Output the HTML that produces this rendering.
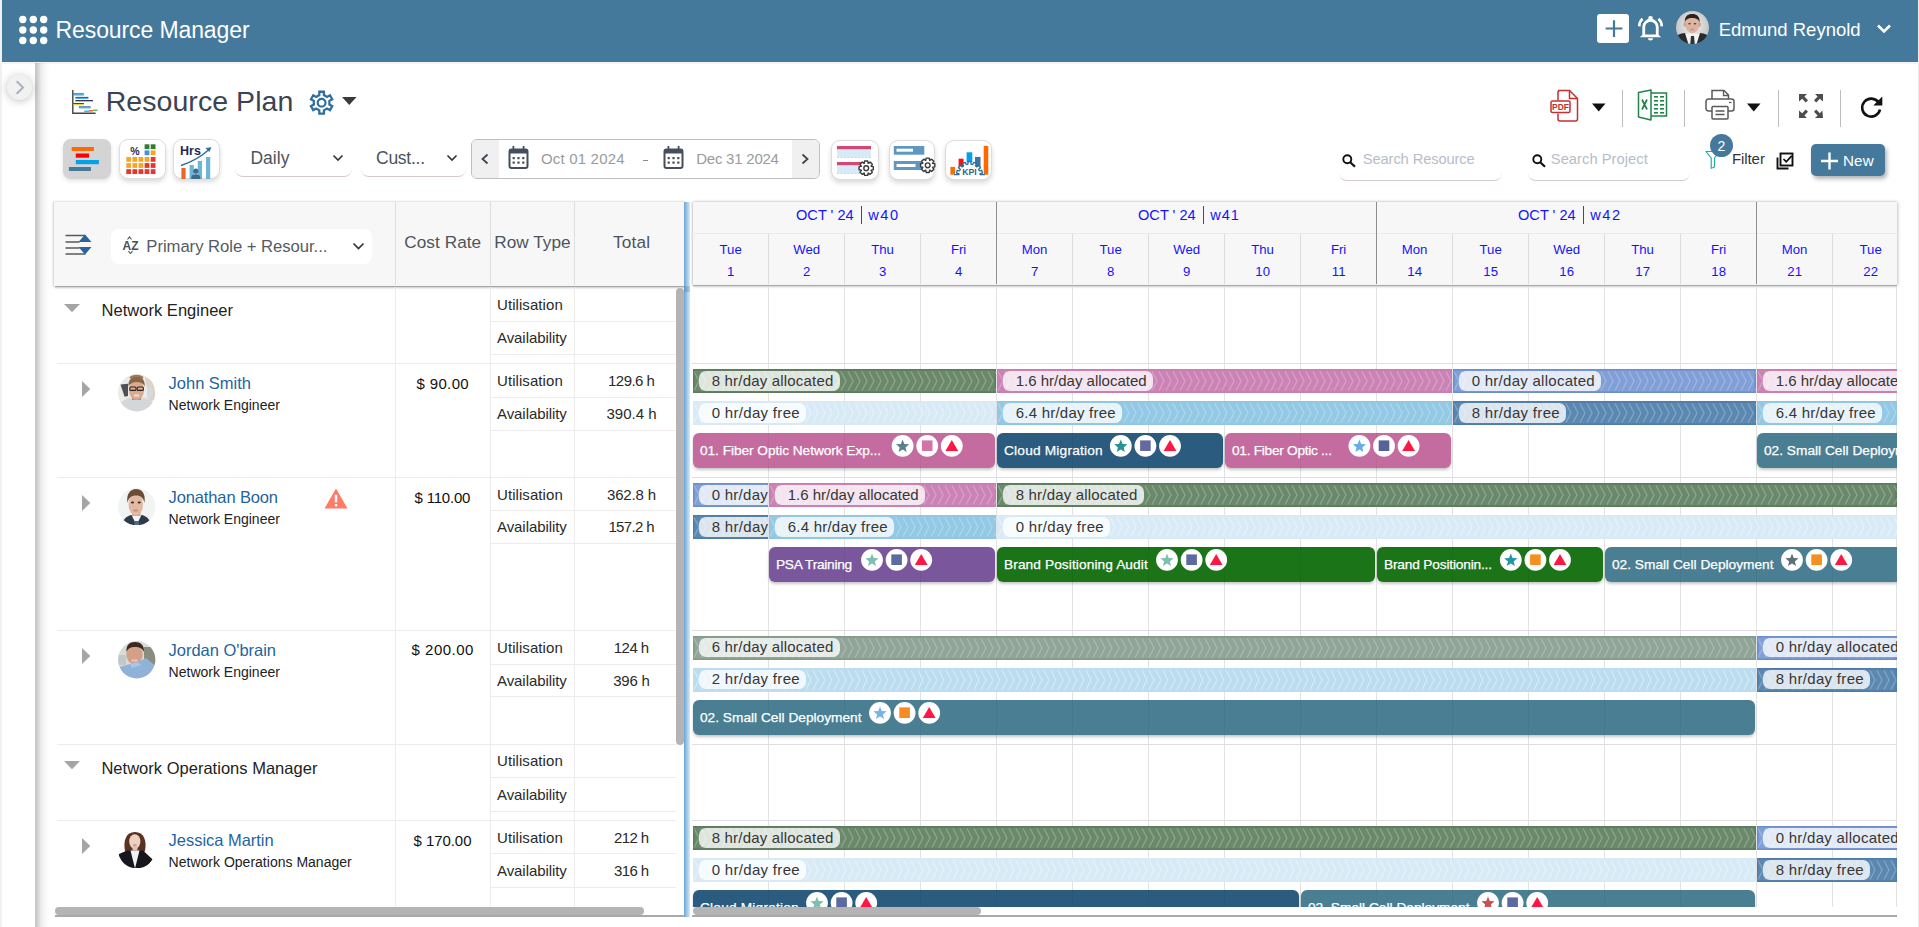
<!DOCTYPE html>
<html><head><meta charset="utf-8"><title>Resource Plan</title>
<style>
html,body{margin:0;padding:0;}
body{width:1919px;height:927px;overflow:hidden;position:relative;background:#fff;font-family:"Liberation Sans", sans-serif;}
.t{position:absolute;white-space:nowrap;line-height:1;}
svg{overflow:visible}
</style></head><body>
<div style="position:absolute;left:0px;top:0px;width:2px;height:927px;background:#f1f1f1"></div><div style="position:absolute;left:1918px;top:0px;width:1px;height:927px;background:#ececec"></div><div style="position:absolute;left:2px;top:62px;width:1916px;height:1.5px;background:#f6f4f2"></div><div style="position:absolute;left:35px;top:63px;width:16px;height:864px;background:linear-gradient(to right,rgba(0,0,0,0.23),rgba(0,0,0,0.2) 12%,rgba(0,0,0,0.07) 40%,rgba(0,0,0,0.015) 75%,rgba(0,0,0,0))"></div><div style="position:absolute;left:2px;top:0px;width:1916px;height:62px;background:#44799c"></div><svg style="position:absolute;left:0px;top:0px;" width="60" height="60" viewBox="0 0 60 60"><circle cx="22.8" cy="19.5" r="3.7" fill="#fff"/><circle cx="22.8" cy="30" r="3.7" fill="#fff"/><circle cx="22.8" cy="40.5" r="3.7" fill="#fff"/><circle cx="33.3" cy="19.5" r="3.7" fill="#fff"/><circle cx="33.3" cy="30" r="3.7" fill="#fff"/><circle cx="33.3" cy="40.5" r="3.7" fill="#fff"/><circle cx="43.7" cy="19.5" r="3.7" fill="#fff"/><circle cx="43.7" cy="30" r="3.7" fill="#fff"/><circle cx="43.7" cy="40.5" r="3.7" fill="#fff"/></svg><div class="t" style="left:55.6px;top:18.9px;font-size:23px;color:#fff;letter-spacing:-0.11px;">Resource Manager</div><div style="position:absolute;left:1597px;top:14px;width:32px;height:29px;background:#fff;border-radius:3px"></div><svg style="position:absolute;left:1597px;top:14px;" width="32" height="29" viewBox="0 0 32 29"><path d="M8.6 14.5H25.4M17 6.3V23" stroke="#44799c" stroke-width="2.2"/></svg><svg style="position:absolute;left:1636px;top:15px;" width="30" height="27" viewBox="0 0 30 27"><path d="M7.75 21V12A6.75 6.75 0 0 1 21.25 12V21" fill="none" stroke="#fff" stroke-width="2.8"/><path d="M3.7 22.2L7 19.4H22L25.3 22.2z" fill="#fff"/><ellipse cx="14.5" cy="3" rx="2.3" ry="1.9" fill="#fff"/><path d="M11.9 23.2H17.1A2.6 2.2 0 0 1 11.9 23.2z" fill="#fff"/><path d="M3.2 11.3C3.4 8 4.6 5.5 6.5 3.8M25.8 11.3C25.6 8 24.4 5.5 22.5 3.8" fill="none" stroke="#fff" stroke-width="2.6"/></svg><svg style="position:absolute;left:1676px;top:11px;" width="33" height="33" viewBox="0 0 33 33"><defs><clipPath id="ca0"><circle cx="16.5" cy="16.5" r="16.5"/></clipPath><radialGradient id="bg0" cx="0.5" cy="0.45" r="0.6"><stop offset="0" stop-color="#f4f4f4"/><stop offset="1" stop-color="#bdbdbd"/></radialGradient><filter id="bh0"><feGaussianBlur stdDeviation="0.45"/></filter></defs><g clip-path="url(#ca0)"><g filter="url(#bh0)"><rect width="33" height="33" fill="url(#bg0)"/><path d="M8.5 22.5h16l1 11h-18z" fill="#f2f2f2"/><path d="M-1 27c2-3 5-4.5 10-5l3.5 11.5H-1zM34 27c-2-3-5-4.5-10-5l-3.5 11.5H34z" fill="#2a2a2a"/><path d="M15 25h3l.8 8.5h-4.6z" fill="#333"/><ellipse cx="16.2" cy="13.2" rx="7.2" ry="9" fill="#dcb4a2"/><ellipse cx="8.8" cy="13.5" rx="1.3" ry="2.2" fill="#d0a08c"/><ellipse cx="23.6" cy="13.5" rx="1.3" ry="2.2" fill="#d0a08c"/><path d="M8.8 11.5c-.5-6 3-8.5 7.4-8.5s8 2.5 7.4 8.5c-.8-3-3-4.5-7.4-4.5s-6.6 1.5-7.4 4.5z" fill="#2a221e"/><ellipse cx="13.5" cy="12.8" rx="1.3" ry="0.7" fill="#4a3a32"/><ellipse cx="19" cy="12.8" rx="1.3" ry="0.7" fill="#4a3a32"/><ellipse cx="16.2" cy="18.5" rx="2.5" ry="0.9" fill="#c89a90"/></g></g></svg><div class="t" style="left:1718.7px;top:20.5px;font-size:18.5px;color:#fff;">Edmund Reynold</div><svg style="position:absolute;left:1876px;top:23px;" width="16" height="12" viewBox="0 0 16 12"><path d="M2 2.5l6 6 6-6" fill="none" stroke="#fff" stroke-width="2.6"/></svg><div style="position:absolute;left:7px;top:75px;width:25px;height:25px;background:#f1f1f1;border-radius:50%;box-shadow:0 1px 9px rgba(0,0,0,0.25)"></div><svg style="position:absolute;left:7px;top:75px;" width="25" height="25" viewBox="0 0 25 25"><path d="M9.7 6.3l6.3 6.2-6.3 6.2" fill="none" stroke="#a9b0bb" stroke-width="2"/></svg><svg style="position:absolute;left:71px;top:89px;" width="28" height="27" viewBox="0 0 28 27"><path d="M1.8 1.1V24.3H24.6" fill="none" stroke="#454545" stroke-width="1.4"/><rect x="2.4" y="4.4" width="10.5" height="1.05" fill="#1d4c73"/><rect x="2.4" y="5.45" width="10.5" height="1.05" fill="#2aa8f0"/><rect x="4.4" y="7.9" width="13.0" height="0.95" fill="#1d3c5a"/><rect x="4.4" y="8.85" width="13.0" height="0.95" fill="#22a0f0"/><rect x="4.4" y="11" width="17.5" height="0.95" fill="#2a1f50"/><rect x="4.4" y="11.95" width="17.5" height="0.95" fill="#a8e000"/><rect x="2.4" y="14.1" width="10.5" height="1.10" fill="#2a2f5a"/><rect x="2.4" y="15.20" width="10.5" height="1.10" fill="#e0dc20"/><rect x="7.9" y="17.4" width="11.7" height="1.00" fill="#1d4c73"/><rect x="7.9" y="18.40" width="11.7" height="1.00" fill="#2aa8f0"/><rect x="13.2" y="21.5" width="4.8" height="1.4" fill="#3aa8f0"/><rect x="18" y="21" width="3.9" height="1.6" fill="#ff6a1a"/><rect x="21.9" y="20.5" width="4.8" height="1.4" fill="#4ac060"/></svg><div class="t" style="left:105.7px;top:86.6px;font-size:28.5px;color:#3b4452;letter-spacing:0.06px;">Resource Plan</div><svg style="position:absolute;left:309px;top:90px;" width="26" height="26" viewBox="0 0 26 26"><path d="M10.30 5.04L10.30 1.74L14.90 1.74L14.90 5.04L18.09 6.88L20.94 5.23L23.24 9.21L20.39 10.86L20.39 14.54L23.24 16.19L20.94 20.17L18.09 18.52L14.90 20.36L14.90 23.66L10.30 23.66L10.30 20.36L7.11 18.52L4.26 20.17L1.96 16.19L4.81 14.54L4.81 10.86L1.96 9.21L4.26 5.23L7.11 6.88Z" fill="none" stroke="#2f6fa0" stroke-width="2.3" stroke-linejoin="miter"/><circle cx="12.6" cy="12.7" r="3.9" fill="none" stroke="#2f6fa0" stroke-width="2.2"/></svg><svg style="position:absolute;left:342px;top:97px;" width="15" height="9" viewBox="0 0 15 9"><path d="M0 0h14.5L7.25 8z" fill="#3a3a3a"/></svg><svg style="position:absolute;left:1550px;top:89px;" width="32" height="33" viewBox="0 0 32 33"><path d="M8 1.5h11.5l8 8V30a2 2 0 0 1-2 2H10a2 2 0 0 1-2-2v-5.5M8 11.5V3.5a2 2 0 0 1 2-2" fill="none" stroke="#c52f2f" stroke-width="1.5"/><path d="M19.5 1.5v8h8" fill="none" stroke="#c52f2f" stroke-width="1.5"/><rect x="1" y="12" width="19" height="11.5" rx="1.5" fill="#fff" stroke="#c52f2f" stroke-width="1.5"/><text x="10.5" y="21" font-family="Liberation Sans" font-size="8.5" font-weight="700" fill="#c52f2f" text-anchor="middle">PDF</text></svg><svg style="position:absolute;left:1592px;top:103px;" width="14" height="9" viewBox="0 0 14 9"><path d="M0 .5h13.5L6.75 8.5z" fill="#111"/></svg><div style="position:absolute;left:1622px;top:90px;width:1px;height:37px;background:#bdbdbd"></div><div style="position:absolute;left:1684px;top:90px;width:1px;height:37px;background:#bdbdbd"></div><div style="position:absolute;left:1778px;top:90px;width:1px;height:37px;background:#bdbdbd"></div><div style="position:absolute;left:1840px;top:90px;width:1px;height:37px;background:#bdbdbd"></div><svg style="position:absolute;left:1637px;top:89px;" width="32" height="32" viewBox="0 0 32 32"><path d="M1.5 3.5L14 1v30L1.5 28z" fill="#fff" stroke="#21844a" stroke-width="1.5" stroke-linejoin="round"/><path d="M14 4h15.5v23H14" fill="none" stroke="#21844a" stroke-width="1.5"/><path d="M5 10.5l5 10M10 10.5l-5 10" stroke="#21844a" stroke-width="1.7"/><rect x="17" y="7" width="4" height="1.6" fill="#21844a"/><rect x="23" y="7" width="4" height="1.6" fill="#21844a"/><rect x="17" y="11" width="4" height="1.6" fill="#21844a"/><rect x="23" y="11" width="4" height="1.6" fill="#21844a"/><rect x="17" y="15" width="4" height="1.6" fill="#21844a"/><rect x="23" y="15" width="4" height="1.6" fill="#21844a"/><rect x="17" y="19" width="4" height="1.6" fill="#21844a"/><rect x="23" y="19" width="4" height="1.6" fill="#21844a"/><rect x="17" y="23" width="4" height="1.6" fill="#21844a"/><rect x="23" y="23" width="4" height="1.6" fill="#21844a"/></svg><svg style="position:absolute;left:1705px;top:89px;" width="31" height="32" viewBox="0 0 31 32"><path d="M7 10V1.5h12l4.5 4.5V10" fill="none" stroke="#5a5a5a" stroke-width="1.5"/><path d="M18.5 1.5v5h5" fill="none" stroke="#5a5a5a" stroke-width="1.3"/><path d="M7 22H3.5a2.5 2.5 0 0 1-2.5-2.5v-7a2.5 2.5 0 0 1 2.5-2.5h23a2.5 2.5 0 0 1 2.5 2.5v7a2.5 2.5 0 0 1-2.5 2.5H23" fill="none" stroke="#5a5a5a" stroke-width="1.5"/><rect x="7" y="17.5" width="16" height="12.5" rx="1" fill="#fff" stroke="#5a5a5a" stroke-width="1.5"/><path d="M10.5 22h9M10.5 25.5h9" stroke="#5a5a5a" stroke-width="1.5"/><rect x="24" y="12.8" width="2.5" height="1.3" fill="#5a5a5a"/></svg><svg style="position:absolute;left:1747px;top:103px;" width="14" height="9" viewBox="0 0 14 9"><path d="M0 .5h13.5L6.75 8.5z" fill="#111"/></svg><svg style="position:absolute;left:1798px;top:93px;" width="26" height="26" viewBox="0 0 26 26"><g fill="#4d4d4d"><path d="M1 1h8l-2.6 2.6 3.6 3.6-2.2 2.2-3.6-3.6L1 8.4z"/><path d="M25 1h-8l2.6 2.6-3.6 3.6 2.2 2.2 3.6-3.6L25 8.4z"/><path d="M1 25h8l-2.6-2.6 3.6-3.6-2.2-2.2-3.6 3.6L1 17.6z"/><path d="M25 25h-8l2.6-2.6-3.6-3.6 2.2-2.2 3.6 3.6 2.6-2.6z"/></g></svg><svg style="position:absolute;left:1859px;top:94px;" width="25" height="25" viewBox="0 0 25 25"><path d="M19.6 8.5A9 9 0 1 0 21 15.5" fill="none" stroke="#111" stroke-width="2.6"/><path d="M23.3 2.5v9h-9z" fill="#111"/></svg><div style="position:absolute;left:63px;top:139px;width:48px;height:40px;background:#d4d4d4;border-radius:8px;box-shadow:0 2px 4px rgba(0,0,0,0.12)"></div><svg style="position:absolute;left:63px;top:139px;" width="48" height="40" viewBox="0 0 48 40"><rect x="8.7" y="8" width="22.2" height="4" fill="#ff6a00"/><rect x="12.8" y="14.5" width="13.2" height="4.2" fill="#ff0000"/><rect x="12.8" y="21" width="23.1" height="4.2" fill="#00a2e8"/><rect x="5.9" y="28" width="22" height="4" fill="#44789c"/></svg><div style="position:absolute;left:119px;top:139px;width:47px;height:40px;background:#fff;border:1px solid #dedede;box-sizing:border-box;border-radius:9px;box-shadow:0 3px 4px rgba(0,0,0,0.14)"></div><div style="position:absolute;left:173px;top:139px;width:47px;height:40px;background:#fff;border:1px solid #dedede;box-sizing:border-box;border-radius:9px;box-shadow:0 3px 4px rgba(0,0,0,0.14)"></div><svg style="position:absolute;left:119px;top:139px;" width="47" height="40" viewBox="0 0 47 40"><rect x="7.3" y="18.0" width="4.8" height="4.8" fill="#f5a623"/><rect x="13.4" y="18.0" width="4.8" height="4.8" fill="#f5a623"/><rect x="19.5" y="18.0" width="4.8" height="4.8" fill="#f5a623"/><rect x="25.6" y="18.0" width="4.8" height="4.8" fill="#f5a623"/><rect x="31.7" y="18.0" width="4.8" height="4.8" fill="#e8352f"/><rect x="7.3" y="24.1" width="4.8" height="4.8" fill="#f5a623"/><rect x="13.4" y="24.1" width="4.8" height="4.8" fill="#f5a623"/><rect x="19.5" y="24.1" width="4.8" height="4.8" fill="#f5a623"/><rect x="25.6" y="24.1" width="4.8" height="4.8" fill="#e8352f"/><rect x="31.7" y="24.1" width="4.8" height="4.8" fill="#e8352f"/><rect x="7.3" y="30.2" width="4.8" height="4.8" fill="#e8352f"/><rect x="13.4" y="30.2" width="4.8" height="4.8" fill="#e8352f"/><rect x="19.5" y="30.2" width="4.8" height="4.8" fill="#e8352f"/><rect x="25.6" y="30.2" width="4.8" height="4.8" fill="#e8352f"/><rect x="31.7" y="30.2" width="4.8" height="4.8" fill="#e8352f"/><rect x="25.6" y="5.3" width="4.8" height="4.8" fill="#2e7d32"/><rect x="31.7" y="5.3" width="4.8" height="4.8" fill="#2e7d32"/><rect x="25.6" y="11.4" width="4.8" height="4.8" fill="#4a90d9"/><rect x="31.7" y="11.4" width="4.8" height="4.8" fill="#f5a623"/><text x="16" y="15.8" font-family="Liberation Sans" font-size="10.5" font-weight="700" fill="#1f2a5a" text-anchor="middle">%</text></svg><svg style="position:absolute;left:173px;top:139px;" width="47" height="40" viewBox="0 0 47 40"><text x="7" y="15.8" font-family="Liberation Sans" font-size="12.5" font-weight="700" fill="#1f2a5a">Hrs</text><path d="M8 26.5C17 23.5 28 18 36 10.5" fill="none" stroke="#2f6f9a" stroke-width="1.4"/><path d="M38.5 8.2l-6 .9 3.8 4z" fill="#2f6f9a"/><rect x="8.4" y="29" width="4.2" height="11" fill="#e8682a"/><rect x="16.6" y="26" width="4.2" height="14" fill="#6bb6d8"/><rect x="24.8" y="22" width="4.2" height="18" fill="#6bb6d8"/><rect x="33" y="18" width="4.2" height="22" fill="#6bb6d8"/><circle cx="22.8" cy="32.2" r="2.6" fill="#3c6a8a"/><path d="M18.2 40c0-3.8 1.8-4.8 4.6-4.8s4.6 1 4.6 4.8z" fill="#3c6a8a"/></svg><div style="position:absolute;left:235px;top:157px;width:117px;height:20px;border-bottom:1px solid #d6c9c9;border-radius:0 0 8px 8px;box-sizing:border-box"></div><div class="t" style="left:250.4px;top:149.6px;font-size:17.5px;color:#4b5561;letter-spacing:0.03px;">Daily</div><svg style="position:absolute;left:332px;top:154px;" width="12" height="8" viewBox="0 0 12 8"><path d="M1.5 1.5l4.5 4.5 4.5-4.5" fill="none" stroke="#333" stroke-width="1.6"/></svg><div style="position:absolute;left:361px;top:157px;width:104.5px;height:20px;border-bottom:1px solid #d6c9c9;border-radius:0 0 8px 8px;box-sizing:border-box"></div><div class="t" style="left:376.0px;top:149.6px;font-size:17.5px;color:#4b5561;letter-spacing:-0.26px;">Cust...</div><svg style="position:absolute;left:445.5px;top:154px;" width="12" height="8" viewBox="0 0 12 8"><path d="M1.5 1.5l4.5 4.5 4.5-4.5" fill="none" stroke="#333" stroke-width="1.6"/></svg><div style="position:absolute;left:471px;top:139px;width:349px;height:40px;border:1px solid #bfbfbf;border-radius:6px;box-sizing:border-box;overflow:hidden;background:#fff"></div><div style="position:absolute;left:472px;top:140px;width:27px;height:38px;background:#f0f0f0;border-radius:5px 0 0 5px"></div><div style="position:absolute;left:792px;top:140px;width:27px;height:38px;background:#f0f0f0;border-radius:0 5px 5px 0"></div><svg style="position:absolute;left:480px;top:153px;" width="10" height="12" viewBox="0 0 10 12"><path d="M7.5 1.5l-5 4.5 5 4.5" fill="none" stroke="#3d4652" stroke-width="1.8"/></svg><svg style="position:absolute;left:800px;top:153px;" width="10" height="12" viewBox="0 0 10 12"><path d="M2.5 1.5l5 4.5-5 4.5" fill="none" stroke="#3d4652" stroke-width="1.8"/></svg><svg style="position:absolute;left:508px;top:146px;" width="21" height="23" viewBox="0 0 21 23"><rect x="1.5" y="3.5" width="18" height="18.5" rx="2" fill="#fff" stroke="#454e5a" stroke-width="2"/><rect x="1.5" y="3.5" width="18" height="4" fill="#454e5a"/><rect x="4.5" y="0" width="1.8" height="4" fill="#454e5a"/><rect x="14.7" y="0" width="1.8" height="4" fill="#454e5a"/><rect x="4.6" y="11" width="2.2" height="2.2" fill="#454e5a"/><rect x="4.6" y="15.5" width="2.2" height="2.2" fill="#454e5a"/><rect x="9.4" y="11" width="2.2" height="2.2" fill="#454e5a"/><rect x="9.4" y="15.5" width="2.2" height="2.2" fill="#454e5a"/><rect x="14.2" y="11" width="2.2" height="2.2" fill="#454e5a"/><rect x="14.2" y="15.5" width="2.2" height="2.2" fill="#454e5a"/></svg><svg style="position:absolute;left:663px;top:146px;" width="21" height="23" viewBox="0 0 21 23"><rect x="1.5" y="3.5" width="18" height="18.5" rx="2" fill="#fff" stroke="#454e5a" stroke-width="2"/><rect x="1.5" y="3.5" width="18" height="4" fill="#454e5a"/><rect x="4.5" y="0" width="1.8" height="4" fill="#454e5a"/><rect x="14.7" y="0" width="1.8" height="4" fill="#454e5a"/><rect x="4.6" y="11" width="2.2" height="2.2" fill="#454e5a"/><rect x="4.6" y="15.5" width="2.2" height="2.2" fill="#454e5a"/><rect x="9.4" y="11" width="2.2" height="2.2" fill="#454e5a"/><rect x="9.4" y="15.5" width="2.2" height="2.2" fill="#454e5a"/><rect x="14.2" y="11" width="2.2" height="2.2" fill="#454e5a"/><rect x="14.2" y="15.5" width="2.2" height="2.2" fill="#454e5a"/></svg><div class="t" style="left:541.0px;top:151.0px;font-size:15px;color:#9b9b9b;letter-spacing:0.18px;">Oct 01 2024</div><div style="position:absolute;left:643px;top:159.5px;width:5px;height:1.5px;background:#8a8a8a"></div><div class="t" style="left:696.2px;top:151.0px;font-size:15px;color:#9b9b9b;letter-spacing:-0.23px;">Dec 31 2024</div><div style="position:absolute;left:831px;top:140px;width:48px;height:40px;background:#fff;border:1px solid #dcdcdc;box-sizing:border-box;border-radius:9px;box-shadow:0 3px 5px rgba(0,0,0,0.15)"></div><div style="position:absolute;left:889px;top:140px;width:46px;height:40px;background:#fff;border:1px solid #dcdcdc;box-sizing:border-box;border-radius:9px;box-shadow:0 3px 5px rgba(0,0,0,0.15)"></div><div style="position:absolute;left:944.5px;top:140px;width:47px;height:40px;background:#fff;border:1px solid #dcdcdc;box-sizing:border-box;border-radius:9px;box-shadow:0 3px 5px rgba(0,0,0,0.15)"></div><svg style="position:absolute;left:831px;top:140px;" width="48" height="40" viewBox="0 0 48 40"><rect x="6" y="6" width="34" height="11.5" fill="#d6ebf7"/><rect x="6" y="6" width="34" height="3.2" fill="#d5486f"/><rect x="6" y="22" width="34" height="11.5" fill="#d6ebf7"/><rect x="6" y="22" width="34" height="3.2" fill="#d5486f"/><path d="M6 17.5h34M6 33.5h34" stroke="#9ccbe6" stroke-width="0.6" stroke-dasharray="2 1.5"/><path d="M40.13 26.25L42.33 26.65L42.33 29.75L40.13 30.15L40.06 30.30L41.34 32.15L39.15 34.34L37.30 33.06L37.15 33.13L36.75 35.33L33.65 35.33L33.25 33.13L33.10 33.06L31.25 34.34L29.06 32.15L30.34 30.30L30.27 30.15L28.07 29.75L28.07 26.65L30.27 26.25L30.34 26.10L29.06 24.25L31.25 22.06L33.10 23.34L33.25 23.27L33.65 21.07L36.75 21.07L37.15 23.27L37.30 23.34L39.15 22.06L41.34 24.25L40.06 26.10Z" fill="#fff" stroke="#3a3a3a" stroke-width="1.4" stroke-linejoin="round"/><circle cx="35.2" cy="28.2" r="2.38" fill="none" stroke="#3a3a3a" stroke-width="1.4"/></svg><svg style="position:absolute;left:889px;top:140px;" width="46" height="40" viewBox="0 0 46 40"><rect x="4.8" y="6" width="30.5" height="8.7" fill="#5f97c1"/><rect x="7.5" y="8.7" width="16.5" height="3" fill="#fff"/><rect x="4.8" y="21" width="30.5" height="9" fill="#5f97c1"/><rect x="7.5" y="24" width="19" height="3" fill="#fff"/><path d="M43.63 23.35L45.83 23.75L45.83 26.85L43.63 27.25L43.56 27.40L44.84 29.25L42.65 31.44L40.80 30.16L40.65 30.23L40.25 32.43L37.15 32.43L36.75 30.23L36.60 30.16L34.75 31.44L32.56 29.25L33.84 27.40L33.77 27.25L31.57 26.85L31.57 23.75L33.77 23.35L33.84 23.20L32.56 21.35L34.75 19.16L36.60 20.44L36.75 20.37L37.15 18.17L40.25 18.17L40.65 20.37L40.80 20.44L42.65 19.16L44.84 21.35L43.56 23.20Z" fill="#fff" stroke="#3a3a3a" stroke-width="1.4" stroke-linejoin="round"/><circle cx="38.7" cy="25.3" r="2.38" fill="none" stroke="#3a3a3a" stroke-width="1.4"/></svg><svg style="position:absolute;left:944.5px;top:140px;" width="47" height="40" viewBox="0 0 47 40"><rect x="5.4" y="26.9" width="4.6" height="7.8" fill="#ff6a00"/><rect x="13.6" y="18.7" width="5" height="10" fill="#ff1010"/><rect x="21.6" y="12.3" width="5.7" height="10" fill="#00a2e8"/><rect x="30" y="16.9" width="5.5" height="10" fill="#3f73a0"/><rect x="38.7" y="5.9" width="4.6" height="28.8" fill="#ff6a00"/><path d="M9.00 34.60L13.90 34.60L13.94 33.73L11.58 33.19L12.24 30.26L14.60 30.80L15.36 29.23L13.47 27.72L15.34 25.38L17.23 26.88L18.60 25.80L17.55 23.62L20.25 22.31L21.30 24.50L23.00 24.11L23.00 21.69L26.00 21.69L26.00 24.11L27.70 24.50L28.75 22.31L31.45 23.62L30.40 25.80L31.77 26.88L33.66 25.38L35.53 27.72L33.64 29.23L34.40 30.80L36.76 30.26L37.42 33.19L35.06 33.73L35.10 34.60L40.00 34.60" fill="#fff" stroke="#2f6f9a" stroke-width="1.3" stroke-linejoin="round"/><text x="24.5" y="34.6" font-family="Liberation Sans" font-size="8.6" font-weight="700" fill="#2f5f8a" text-anchor="middle">KPI</text></svg><div style="position:absolute;left:1339px;top:160px;width:163px;height:20.5px;border-bottom:1px solid #d6c9c9;border-radius:0 0 8px 8px;box-sizing:border-box"></div><svg style="position:absolute;left:1342px;top:153.5px;" width="15" height="13" viewBox="0 0 15 13"><circle cx="5.3" cy="5.3" r="4" fill="none" stroke="#111" stroke-width="1.9"/><path d="M8.2 8.2l4.8 4.6" stroke="#111" stroke-width="2.2"/></svg><div class="t" style="left:1362.8px;top:151.9px;font-size:14.7px;color:#b6bdc8;letter-spacing:-0.11px;">Search Resource</div><div style="position:absolute;left:1528px;top:160px;width:162px;height:20.5px;border-bottom:1px solid #d6c9c9;border-radius:0 0 8px 8px;box-sizing:border-box"></div><svg style="position:absolute;left:1531.5px;top:153.5px;" width="15" height="13" viewBox="0 0 15 13"><circle cx="5.3" cy="5.3" r="4" fill="none" stroke="#111" stroke-width="1.9"/><path d="M8.2 8.2l4.8 4.6" stroke="#111" stroke-width="2.2"/></svg><div class="t" style="left:1550.8px;top:151.9px;font-size:14.7px;color:#b6bdc8;letter-spacing:0.05px;">Search Project</div><svg style="position:absolute;left:1705px;top:150px;" width="16" height="19" viewBox="0 0 16 19"><path d="M1 1.5h13.5l-5 6.5v9l-3.3 1.3V8z" fill="none" stroke="#25a9a9" stroke-width="1.2" stroke-linejoin="round"/></svg><div style="position:absolute;left:1710px;top:134px;width:23px;height:23px;background:#44799c;border-radius:50%"></div><div class="t" style="left:1717.6px;top:139.3px;font-size:14px;color:#fff;">2</div><div class="t" style="left:1731.9px;top:151.3px;font-size:15px;color:#333;letter-spacing:-0.07px;">Filter</div><svg style="position:absolute;left:1776px;top:152px;" width="18" height="18" viewBox="0 0 18 18"><path d="M1.5 5.5v11h11" fill="none" stroke="#111" stroke-width="1.9"/><rect x="4.5" y="1.5" width="12" height="12" fill="none" stroke="#111" stroke-width="1.9"/><path d="M7.5 7l2.7 2.8 5.5-6" fill="none" stroke="#111" stroke-width="1.8"/></svg><div style="position:absolute;left:1811px;top:144px;width:74px;height:32px;background:#44799c;border-radius:5px;box-shadow:2px 3px 4px rgba(0,0,0,0.3)"></div><svg style="position:absolute;left:1819.5px;top:151.5px;" width="19" height="18" viewBox="0 0 19 18"><path d="M1 9h17M9.5 .5v17" stroke="#fff" stroke-width="2.4"/></svg><div class="t" style="left:1843.0px;top:153.2px;font-size:15.2px;color:#fff;letter-spacing:0.11px;">New</div><div style="position:absolute;left:54px;top:201.5px;width:632px;height:85px;background:#f7f7f7;box-shadow:-1px 0 2px rgba(0,0,0,0.18), 0 -1px 2px rgba(0,0,0,0.06)"></div><div style="position:absolute;left:55px;top:286px;width:631px;height:1px;background:#a9a9a9;box-shadow:0 1px 2px rgba(0,0,0,0.22)"></div><div style="position:absolute;left:395px;top:202px;width:1px;height:83px;background:#dedede"></div><div style="position:absolute;left:490px;top:202px;width:1px;height:83px;background:#dedede"></div><div style="position:absolute;left:574px;top:202px;width:1px;height:83px;background:#dedede"></div><svg style="position:absolute;left:64px;top:233px;" width="30" height="23" viewBox="0 0 30 23"><path d="M1.5 2.5h20M1.5 9h14M1.5 15h14M1.5 21h20" stroke="#5a5a5a" stroke-width="1.5"/><path d="M21 1.5l6.5 7.5h-13z" fill="#2a64a0"/><path d="M21 21.5l6.5-7.5h-13z" fill="#2a64a0"/></svg><div style="position:absolute;left:111px;top:229px;width:261px;height:35px;background:#fff;border-radius:8px"></div><svg style="position:absolute;left:122px;top:236px;" width="17" height="18" viewBox="0 0 17 18"><text x="0.5" y="14" font-family="Liberation Sans" font-size="12" font-weight="700" fill="#4a4f56">AZ</text><path d="M5.5 3.5l2-2.5 2 2.5M6.5 15.2l2 2.3 2-2.3" fill="none" stroke="#4a4f56" stroke-width="1.1"/></svg><div class="t" style="left:146.3px;top:239.1px;font-size:16.7px;color:#555b62;letter-spacing:-0.05px;">Primary Role + Resour...</div><svg style="position:absolute;left:352px;top:242px;" width="13" height="9" viewBox="0 0 13 9"><path d="M1.5 1.5l5 5 5-5" fill="none" stroke="#333" stroke-width="1.7"/></svg><div class="t" style="left:404.2px;top:234.0px;font-size:17.2px;color:#4d545c;letter-spacing:0.07px;">Cost Rate</div><div class="t" style="left:494.2px;top:234.0px;font-size:17.2px;color:#4d545c;letter-spacing:0.05px;">Row Type</div><div class="t" style="left:613.0px;top:234.0px;font-size:17.2px;color:#4d545c;letter-spacing:0.17px;">Total</div><div style="position:absolute;left:55px;top:287px;width:631px;height:620px;overflow:hidden"><div style="position:absolute;left:436px;top:34px;width:185px;height:1px;background:#eeebeb"></div><div style="position:absolute;left:436px;top:67px;width:185px;height:1px;background:#eeebeb"></div><div style="position:absolute;left:2px;top:76px;width:619px;height:1px;background:#eeebeb"></div><div style="position:absolute;left:436px;top:110px;width:185px;height:1px;background:#eeebeb"></div><div style="position:absolute;left:436px;top:143px;width:185px;height:1px;background:#eeebeb"></div><div style="position:absolute;left:2px;top:190px;width:619px;height:1px;background:#eeebeb"></div><div style="position:absolute;left:436px;top:223px;width:185px;height:1px;background:#eeebeb"></div><div style="position:absolute;left:436px;top:256px;width:185px;height:1px;background:#eeebeb"></div><div style="position:absolute;left:2px;top:343px;width:619px;height:1px;background:#eeebeb"></div><div style="position:absolute;left:436px;top:377px;width:185px;height:1px;background:#eeebeb"></div><div style="position:absolute;left:436px;top:409px;width:185px;height:1px;background:#eeebeb"></div><div style="position:absolute;left:2px;top:457px;width:619px;height:1px;background:#eeebeb"></div><div style="position:absolute;left:436px;top:490px;width:185px;height:1px;background:#eeebeb"></div><div style="position:absolute;left:436px;top:524px;width:185px;height:1px;background:#eeebeb"></div><div style="position:absolute;left:2px;top:533px;width:619px;height:1px;background:#eeebeb"></div><div style="position:absolute;left:436px;top:566px;width:185px;height:1px;background:#eeebeb"></div><div style="position:absolute;left:436px;top:600px;width:185px;height:1px;background:#eeebeb"></div><div style="position:absolute;left:2px;top:673px;width:619px;height:1px;background:#eeebeb"></div><div style="position:absolute;left:340px;top:0;width:1px;height:620px;background:#eeebeb"></div><div style="position:absolute;left:435px;top:0;width:1px;height:620px;background:#eeebeb"></div><div style="position:absolute;left:519px;top:0;width:1px;height:620px;background:#eeebeb"></div></div><svg style="position:absolute;left:64px;top:303.8px;" width="17" height="9" viewBox="0 0 17 9"><path d="M0 0h16L8 8.3z" fill="#a5a5a5"/></svg><div class="t" style="left:101.6px;top:302.0px;font-size:16.5px;color:#222;letter-spacing:0.02px;">Network Engineer</div><div class="t" style="left:497.0px;top:296.8px;font-size:15px;color:#2a2a2a;letter-spacing:0.07px;">Utilisation</div><div class="t" style="left:497.0px;top:330.3px;font-size:15px;color:#2a2a2a;letter-spacing:-0.07px;">Availability</div><svg style="position:absolute;left:82px;top:381.0px;" width="9" height="17" viewBox="0 0 9 17"><path d="M0 0v16l8.3-8z" fill="#a5a5a5"/></svg><svg style="position:absolute;left:117.8px;top:374.1px;" width="37.4" height="37.4" viewBox="0 0 37.4 37.4"><defs><clipPath id="cl1"><circle cx="18.7" cy="18.7" r="18.7"/></clipPath><filter id="bl1" x="-10%" y="-10%" width="120%" height="120%"><feGaussianBlur stdDeviation="0.55"/></filter></defs><g clip-path="url(#cl1)"><g filter="url(#bl1)"><rect x="-2" y="-2" width="42" height="42" fill="#eeeae6"/><path d="M27 3l8 4 3 18-7 3z" fill="#dcd3ca"/><path d="M29 13l5 1v9l-5 1z" fill="#cfdbe4"/><path d="M2.5 10.5l7.5-.8v12.4l-3.4.6z" fill="#505056"/><path d="M-1 39c1-9 6-13 12-15l8-2 8 2c6 2 11 6 12 15z" fill="#d4d7da"/><rect x="14" y="20" width="9" height="6" fill="#c08a70"/><ellipse cx="18.5" cy="16" rx="7.6" ry="10" fill="#dba98d"/><path d="M10.5 12.5c-.5-7 3.5-10 8.3-10s8.3 3 8 10c-1.5-3-4-4.5-8-4.5s-6.8 1.5-8.3 4.5z" fill="#8a6648"/><path d="M12 4c3-3 9-3 13 0" stroke="#9a7656" stroke-width="2.2" fill="none"/><rect x="11.8" y="13" width="6.2" height="3.4" rx="1" fill="none" stroke="#2a2420" stroke-width="1.05"/><rect x="19.2" y="13" width="6.2" height="3.4" rx="1" fill="none" stroke="#2a2420" stroke-width="1.05"/><ellipse cx="18.6" cy="21.5" rx="3" ry="1.2" fill="#f0d6d2"/></g></g></svg><div class="t" style="left:168.6px;top:375.1px;font-size:16.5px;color:#1f64a0;letter-spacing:-0.02px;">John Smith</div><div class="t" style="left:168.6px;top:398.1px;font-size:14px;color:#222;">Network Engineer</div><div class="t" style="left:416.4px;top:375.8px;font-size:15px;color:#111;letter-spacing:0.38px;">$ 90.00</div><div class="t" style="left:497.0px;top:372.6px;font-size:15px;color:#2a2a2a;letter-spacing:0.07px;">Utilisation</div><div class="t" style="left:497.0px;top:405.9px;font-size:15px;color:#2a2a2a;letter-spacing:-0.07px;">Availability</div><div class="t" style="left:608.0px;top:372.6px;font-size:15px;color:#2a2a2a;letter-spacing:-0.52px;">129.6 h</div><div class="t" style="left:606.4px;top:405.9px;font-size:15px;color:#2a2a2a;letter-spacing:0.04px;">390.4 h</div><svg style="position:absolute;left:82px;top:495.0px;" width="9" height="17" viewBox="0 0 9 17"><path d="M0 0v16l8.3-8z" fill="#a5a5a5"/></svg><svg style="position:absolute;left:117.8px;top:488.1px;" width="37.4" height="37.4" viewBox="0 0 37.4 37.4"><defs><clipPath id="cl2"><circle cx="18.7" cy="18.7" r="18.7"/></clipPath><filter id="bl2" x="-10%" y="-10%" width="120%" height="120%"><feGaussianBlur stdDeviation="0.55"/></filter></defs><g clip-path="url(#cl2)"><g filter="url(#bl2)"><rect x="-2" y="-2" width="42" height="42" fill="#f2f3f3"/><path d="M4 37c1-6 5-9 9-10h11c4 1 8 4 9 10z" fill="#2f3b4c"/><path d="M13.5 27h10l-5 10z" fill="#f4f4f4"/><path d="M17 33h3.5l1 4h-5.5z" fill="#4a6a90"/><rect x="14" y="22" width="8.5" height="6" fill="#d2a48c"/><ellipse cx="17.8" cy="16.5" rx="7.3" ry="11" fill="#e2b9a2"/><path d="M9.5 15c-1.5-9 3-14 8.5-14s10 4 8.5 14c-1-5-3.5-7.5-8.5-7.5s-7.5 2.5-8.5 7.5z" fill="#6a4e36"/><ellipse cx="14.5" cy="14.5" rx="1.6" ry="1" fill="#3a2a22"/><ellipse cx="21.2" cy="14.5" rx="1.6" ry="1" fill="#3a2a22"/><ellipse cx="17.8" cy="22.5" rx="2.6" ry="1" fill="#c88a80"/></g></g></svg><div class="t" style="left:168.6px;top:489.1px;font-size:16.5px;color:#1f64a0;letter-spacing:-0.13px;">Jonathan Boon</div><div class="t" style="left:168.6px;top:512.1px;font-size:14px;color:#222;">Network Engineer</div><div class="t" style="left:414.6px;top:489.8px;font-size:15px;color:#111;letter-spacing:-0.21px;">$ 110.00</div><div class="t" style="left:497.0px;top:486.6px;font-size:15px;color:#2a2a2a;letter-spacing:0.07px;">Utilisation</div><div class="t" style="left:497.0px;top:519.3px;font-size:15px;color:#2a2a2a;letter-spacing:-0.07px;">Availability</div><div class="t" style="left:607.0px;top:486.6px;font-size:15px;color:#2a2a2a;letter-spacing:-0.17px;">362.8 h</div><div class="t" style="left:608.4px;top:519.3px;font-size:15px;color:#2a2a2a;letter-spacing:-0.62px;">157.2 h</div><svg style="position:absolute;left:324px;top:488px;" width="24" height="21" viewBox="0 0 24 21"><path d="M12 0.5L23.5 20.5H0.5z" fill="#ff7b66"/><rect x="10.8" y="6.8" width="2.4" height="7.6" fill="#fff"/><rect x="10.8" y="16" width="2.4" height="2.4" fill="#fff"/></svg><svg style="position:absolute;left:82px;top:647.5px;" width="9" height="17" viewBox="0 0 9 17"><path d="M0 0v16l8.3-8z" fill="#a5a5a5"/></svg><svg style="position:absolute;left:117.8px;top:640.5999999999999px;" width="37.4" height="37.4" viewBox="0 0 37.4 37.4"><defs><clipPath id="cl3"><circle cx="18.7" cy="18.7" r="18.7"/></clipPath><filter id="bl3" x="-10%" y="-10%" width="120%" height="120%"><feGaussianBlur stdDeviation="0.55"/></filter></defs><g clip-path="url(#cl3)"><g filter="url(#bl3)"><rect x="-2" y="-2" width="42" height="42" fill="#d6dcd8"/><path d="M26 6h12v24h-12z" fill="#8a8c80"/><path d="M0 14h8v10H0z" fill="#c0c8c8"/><ellipse cx="16.5" cy="13.5" rx="8.2" ry="10" fill="#d4a088"/><path d="M8.5 11c-.5-7 3-10 8.5-10s9.5 3 9 10c-1.5-3.5-4-5-9-5s-7 1.5-8.5 5z" fill="#3a2a20"/><path d="M-2 39V27l14-4 8-2 8-4 12 10v12z" fill="#90b2d8"/><path d="M12 23l8-2 3 3-9 3z" fill="#a8c6e8"/><ellipse cx="16.5" cy="19.5" rx="3.4" ry="1.3" fill="#e8c0b8"/></g></g></svg><div class="t" style="left:168.6px;top:641.6px;font-size:16.5px;color:#1f64a0;letter-spacing:-0.02px;">Jordan O'brain</div><div class="t" style="left:168.6px;top:664.6px;font-size:14px;color:#222;">Network Engineer</div><div class="t" style="left:411.6px;top:642.3px;font-size:15px;color:#111;letter-spacing:0.49px;">$ 200.00</div><div class="t" style="left:497.0px;top:639.6px;font-size:15px;color:#2a2a2a;letter-spacing:0.07px;">Utilisation</div><div class="t" style="left:497.0px;top:673.1px;font-size:15px;color:#2a2a2a;letter-spacing:-0.07px;">Availability</div><div class="t" style="left:613.8px;top:639.6px;font-size:15px;color:#2a2a2a;letter-spacing:-0.53px;">124 h</div><div class="t" style="left:613.2px;top:673.1px;font-size:15px;color:#2a2a2a;letter-spacing:-0.23px;">396 h</div><svg style="position:absolute;left:64px;top:760.8px;" width="17" height="9" viewBox="0 0 17 9"><path d="M0 0h16L8 8.3z" fill="#a5a5a5"/></svg><div class="t" style="left:101.4px;top:759.6px;font-size:16.5px;color:#222;letter-spacing:0.02px;">Network Operations Manager</div><div class="t" style="left:497.0px;top:753.4px;font-size:15px;color:#2a2a2a;letter-spacing:0.07px;">Utilisation</div><div class="t" style="left:497.0px;top:786.7px;font-size:15px;color:#2a2a2a;letter-spacing:-0.07px;">Availability</div><svg style="position:absolute;left:82px;top:838.0px;" width="9" height="17" viewBox="0 0 9 17"><path d="M0 0v16l8.3-8z" fill="#a5a5a5"/></svg><svg style="position:absolute;left:117.8px;top:831.0999999999999px;" width="37.4" height="37.4" viewBox="0 0 37.4 37.4"><defs><clipPath id="cl4"><circle cx="18.7" cy="18.7" r="18.7"/></clipPath><filter id="bl4" x="-10%" y="-10%" width="120%" height="120%"><feGaussianBlur stdDeviation="0.55"/></filter></defs><g clip-path="url(#cl4)"><g filter="url(#bl4)"><rect x="-2" y="-2" width="42" height="42" fill="#fff"/><path d="M7 20c-2-10 1-19 10-19s12 9 10 19l-2 2H9z" fill="#5a3022"/><ellipse cx="16.8" cy="10.5" rx="5.6" ry="7.3" fill="#ecd0c2"/><rect x="14.5" y="15" width="5" height="6" fill="#e4c0b0"/><path d="M1 23l8-3.5h16l9.7 9-6.7 8.5H8l-7-7z" fill="#15161f"/><path d="M12.5 19.5h9l-4.5 18z" fill="#f1f1f1"/><ellipse cx="16.8" cy="14.2" rx="2" ry="0.9" fill="#d88a90"/></g></g></svg><div class="t" style="left:168.6px;top:832.1px;font-size:16.5px;color:#1f64a0;letter-spacing:-0.03px;">Jessica Martin</div><div class="t" style="left:168.6px;top:855.1px;font-size:14px;color:#222;letter-spacing:0.01px;">Network Operations Manager</div><div class="t" style="left:413.5px;top:832.8px;font-size:15px;color:#111;letter-spacing:-0.06px;">$ 170.00</div><div class="t" style="left:497.0px;top:829.8px;font-size:15px;color:#2a2a2a;letter-spacing:0.07px;">Utilisation</div><div class="t" style="left:497.0px;top:862.5px;font-size:15px;color:#2a2a2a;letter-spacing:-0.07px;">Availability</div><div class="t" style="left:614.0px;top:829.8px;font-size:15px;color:#2a2a2a;letter-spacing:-0.63px;">212 h</div><div class="t" style="left:614.0px;top:862.5px;font-size:15px;color:#2a2a2a;letter-spacing:-0.63px;">316 h</div><div style="position:absolute;left:676px;top:288px;width:7.5px;height:457px;background:#b4b4b4;border-radius:4px"></div><div style="position:absolute;left:55px;top:907px;width:589px;height:8px;background:#b4b4b4;border-radius:4px"></div><div style="position:absolute;left:55px;top:915px;width:630px;height:2px;background:#a9a9a9"></div><div style="position:absolute;left:684px;top:202px;width:6px;height:715px;background:linear-gradient(to right,#6aa6d4,#a9d0ec 60%,#d9ebf7)"></div><div style="position:absolute;left:684px;top:286px;width:6px;height:6px;background:linear-gradient(to right,#5b97c6,#86b7dc 60%,#b0d2ea)"></div><div style="position:absolute;left:692.5px;top:202px;width:1204.5px;height:83px;background:#f7f7f7;box-shadow:1px 0 3px rgba(0,0,0,0.22), -1px 0 2px rgba(0,0,0,0.18)"></div><div style="position:absolute;left:692.5px;top:285px;width:1204.5px;height:1px;background:#a9a9a9;box-shadow:0 1px 2px rgba(0,0,0,0.22)"></div><div style="position:absolute;left:692px;top:233px;width:1205px;height:1px;background:#ebebeb"></div><div style="position:absolute;left:692px;top:202px;width:1205px;height:82px;overflow:hidden"><div style="position:absolute;left:76px;top:32px;width:1px;height:50px;background:#dcdcdc"></div><div style="position:absolute;left:152px;top:32px;width:1px;height:50px;background:#dcdcdc"></div><div style="position:absolute;left:228px;top:32px;width:1px;height:50px;background:#dcdcdc"></div><div style="position:absolute;left:304.0px;top:0;width:1.3px;height:82px;background:#8e8e8e"></div><div style="position:absolute;left:380px;top:32px;width:1px;height:50px;background:#dcdcdc"></div><div style="position:absolute;left:456px;top:32px;width:1px;height:50px;background:#dcdcdc"></div><div style="position:absolute;left:532px;top:32px;width:1px;height:50px;background:#dcdcdc"></div><div style="position:absolute;left:608px;top:32px;width:1px;height:50px;background:#dcdcdc"></div><div style="position:absolute;left:684.0px;top:0;width:1.3px;height:82px;background:#8e8e8e"></div><div style="position:absolute;left:760px;top:32px;width:1px;height:50px;background:#dcdcdc"></div><div style="position:absolute;left:836px;top:32px;width:1px;height:50px;background:#dcdcdc"></div><div style="position:absolute;left:912px;top:32px;width:1px;height:50px;background:#dcdcdc"></div><div style="position:absolute;left:988px;top:32px;width:1px;height:50px;background:#dcdcdc"></div><div style="position:absolute;left:1064.0px;top:0;width:1.3px;height:82px;background:#8e8e8e"></div><div style="position:absolute;left:1140px;top:32px;width:1px;height:50px;background:#dcdcdc"></div></div><div class="t" style="left:719.5px;top:242.7px;font-size:13.2px;color:#1414fa;">Tue</div><div class="t" style="left:726.9px;top:264.6px;font-size:13.2px;color:#1414fa;">1</div><div class="t" style="left:793.2px;top:242.7px;font-size:13.2px;color:#1414fa;">Wed</div><div class="t" style="left:802.9px;top:264.6px;font-size:13.2px;color:#1414fa;">2</div><div class="t" style="left:871.2px;top:242.7px;font-size:13.2px;color:#1414fa;">Thu</div><div class="t" style="left:878.9px;top:264.6px;font-size:13.2px;color:#1414fa;">3</div><div class="t" style="left:950.9px;top:242.7px;font-size:13.2px;color:#1414fa;">Fri</div><div class="t" style="left:954.9px;top:264.6px;font-size:13.2px;color:#1414fa;">4</div><div class="t" style="left:1021.8px;top:242.7px;font-size:13.2px;color:#1414fa;">Mon</div><div class="t" style="left:1030.9px;top:264.6px;font-size:13.2px;color:#1414fa;">7</div><div class="t" style="left:1099.5px;top:242.7px;font-size:13.2px;color:#1414fa;">Tue</div><div class="t" style="left:1106.9px;top:264.6px;font-size:13.2px;color:#1414fa;">8</div><div class="t" style="left:1173.2px;top:242.7px;font-size:13.2px;color:#1414fa;">Wed</div><div class="t" style="left:1182.9px;top:264.6px;font-size:13.2px;color:#1414fa;">9</div><div class="t" style="left:1251.2px;top:242.7px;font-size:13.2px;color:#1414fa;">Thu</div><div class="t" style="left:1255.3px;top:264.6px;font-size:13.2px;color:#1414fa;">10</div><div class="t" style="left:1330.9px;top:242.7px;font-size:13.2px;color:#1414fa;">Fri</div><div class="t" style="left:1331.8px;top:264.6px;font-size:13.2px;color:#1414fa;">11</div><div class="t" style="left:1401.8px;top:242.7px;font-size:13.2px;color:#1414fa;">Mon</div><div class="t" style="left:1407.3px;top:264.6px;font-size:13.2px;color:#1414fa;">14</div><div class="t" style="left:1479.5px;top:242.7px;font-size:13.2px;color:#1414fa;">Tue</div><div class="t" style="left:1483.3px;top:264.6px;font-size:13.2px;color:#1414fa;">15</div><div class="t" style="left:1553.2px;top:242.7px;font-size:13.2px;color:#1414fa;">Wed</div><div class="t" style="left:1559.3px;top:264.6px;font-size:13.2px;color:#1414fa;">16</div><div class="t" style="left:1631.2px;top:242.7px;font-size:13.2px;color:#1414fa;">Thu</div><div class="t" style="left:1635.3px;top:264.6px;font-size:13.2px;color:#1414fa;">17</div><div class="t" style="left:1710.9px;top:242.7px;font-size:13.2px;color:#1414fa;">Fri</div><div class="t" style="left:1711.3px;top:264.6px;font-size:13.2px;color:#1414fa;">18</div><div class="t" style="left:1781.8px;top:242.7px;font-size:13.2px;color:#1414fa;">Mon</div><div class="t" style="left:1787.3px;top:264.6px;font-size:13.2px;color:#1414fa;">21</div><div class="t" style="left:1859.5px;top:242.7px;font-size:13.2px;color:#1414fa;">Tue</div><div class="t" style="left:1863.3px;top:264.6px;font-size:13.2px;color:#1414fa;">22</div><div class="t" style="left:796.0px;top:207.6px;font-size:14.6px;color:#1414fa;">OCT ' 24</div><div style="position:absolute;left:861.2px;top:206.3px;width:1px;height:17.6px;background:#1414fa;opacity:0.85"></div><div class="t" style="left:868.3px;top:207.6px;font-size:14.6px;color:#1414fa;letter-spacing:1.50px;">w40</div><div class="t" style="left:1138.0px;top:207.6px;font-size:14.6px;color:#1414fa;">OCT ' 24</div><div style="position:absolute;left:1203.2px;top:206.3px;width:1px;height:17.6px;background:#1414fa;opacity:0.85"></div><div class="t" style="left:1210.3px;top:207.6px;font-size:14.6px;color:#1414fa;letter-spacing:0.86px;">w41</div><div class="t" style="left:1518.0px;top:207.6px;font-size:14.6px;color:#1414fa;">OCT ' 24</div><div style="position:absolute;left:1583.2px;top:206.3px;width:1px;height:17.6px;background:#1414fa;opacity:0.85"></div><div class="t" style="left:1590.3px;top:207.6px;font-size:14.6px;color:#1414fa;letter-spacing:1.50px;">w42</div><div style="position:absolute;left:692px;top:287px;width:1205px;height:620px;overflow:hidden"><div style="position:absolute;left:76px;top:0;width:1px;height:620px;background:#e2e2e2"></div><div style="position:absolute;left:152px;top:0;width:1px;height:620px;background:#e2e2e2"></div><div style="position:absolute;left:228px;top:0;width:1px;height:620px;background:#e2e2e2"></div><div style="position:absolute;left:304px;top:0;width:1px;height:620px;background:#e2e2e2"></div><div style="position:absolute;left:380px;top:0;width:1px;height:620px;background:#e2e2e2"></div><div style="position:absolute;left:456px;top:0;width:1px;height:620px;background:#e2e2e2"></div><div style="position:absolute;left:532px;top:0;width:1px;height:620px;background:#e2e2e2"></div><div style="position:absolute;left:608px;top:0;width:1px;height:620px;background:#e2e2e2"></div><div style="position:absolute;left:684px;top:0;width:1px;height:620px;background:#e2e2e2"></div><div style="position:absolute;left:760px;top:0;width:1px;height:620px;background:#e2e2e2"></div><div style="position:absolute;left:836px;top:0;width:1px;height:620px;background:#e2e2e2"></div><div style="position:absolute;left:912px;top:0;width:1px;height:620px;background:#e2e2e2"></div><div style="position:absolute;left:988px;top:0;width:1px;height:620px;background:#e2e2e2"></div><div style="position:absolute;left:1064px;top:0;width:1px;height:620px;background:#e2e2e2"></div><div style="position:absolute;left:1140px;top:0;width:1px;height:620px;background:#e2e2e2"></div><div style="position:absolute;left:1204px;top:0;width:1px;height:620px;background:#e2e2e2"></div><div style="position:absolute;left:0;top:76px;width:1205px;height:1px;background:#e0dede"></div><div style="position:absolute;left:0;top:190px;width:1205px;height:1px;background:#e0dede"></div><div style="position:absolute;left:0;top:343px;width:1205px;height:1px;background:#e0dede"></div><div style="position:absolute;left:0;top:457px;width:1205px;height:1px;background:#e0dede"></div><div style="position:absolute;left:0;top:533px;width:1205px;height:1px;background:#e0dede"></div><div style="position:absolute;left:0;top:673px;width:1205px;height:1px;background:#e0dede"></div><svg width="0" height="0" style="position:absolute"><defs><pattern id="chw" patternUnits="userSpaceOnUse" width="7" height="24" x="0" y="0"><path d="M1 2.5L6 12L1 21.5" fill="none" stroke="rgba(255,255,255,0.22)" stroke-width="1.4"/></pattern><pattern id="chl" patternUnits="userSpaceOnUse" width="7" height="24" x="0" y="0"><path d="M1 2.5L6 12L1 21.5" fill="none" stroke="rgba(255,255,255,0.35)" stroke-width="1.4"/></pattern></defs></svg><div style="position:absolute;left:1px;top:82.0px;width:303px;height:24px;background:#6a896a;overflow:hidden;box-shadow:inset 0 0 0 1.5px #5b7b5b"><svg width="303" height="24" style="position:absolute;left:0;top:0"><rect width="303" height="24" fill="url(#chw)"/></svg><div style="position:absolute;left:5.5px;top:2.3px;height:19.5px;width:141.2px;border-radius:7px;background:rgba(255,255,255,0.78)"></div><div class="t" style="left:18.7px;top:3.9px;font-size:15px;color:#363636;letter-spacing:0.19px;">8 hr/day allocated</div></div><div style="position:absolute;left:305px;top:82.0px;width:455px;height:24px;background:#cb83b5;overflow:hidden;box-shadow:inset 0 0 0 1.5px #c97eb2"><svg width="455" height="24" style="position:absolute;left:0;top:0"><rect width="455" height="24" fill="url(#chw)"/></svg><div style="position:absolute;left:5.5px;top:2.3px;height:19.5px;width:150.5px;border-radius:7px;background:rgba(255,255,255,0.78)"></div><div class="t" style="left:18.7px;top:3.9px;font-size:15px;color:#363636;">1.6 hr/day allocated</div></div><div style="position:absolute;left:761px;top:82.0px;width:303px;height:24px;background:#7f9fd6;overflow:hidden;box-shadow:inset 0 0 0 1.5px #6c8ecb"><svg width="303" height="24" style="position:absolute;left:0;top:0"><rect width="303" height="24" fill="url(#chw)"/></svg><div style="position:absolute;left:5.5px;top:2.3px;height:19.5px;width:142.5px;border-radius:7px;background:rgba(255,255,255,0.78)"></div><div class="t" style="left:18.7px;top:3.9px;font-size:15px;color:#363636;letter-spacing:0.27px;">0 hr/day allocated</div></div><div style="position:absolute;left:1065px;top:82.0px;width:140px;height:24px;background:#cb83b5;overflow:hidden;box-shadow:inset 0 0 0 1.5px #c97eb2"><svg width="140" height="24" style="position:absolute;left:0;top:0"><rect width="140" height="24" fill="url(#chw)"/></svg><div style="position:absolute;left:5.5px;top:2.3px;height:19.5px;width:150.5px;border-radius:7px;background:rgba(255,255,255,0.78)"></div><div class="t" style="left:18.7px;top:3.9px;font-size:15px;color:#363636;">1.6 hr/day allocated</div></div><div style="position:absolute;left:1px;top:114.0px;width:303px;height:24px;background:#d7eaf5;overflow:hidden;box-shadow:inset 0 0 0 1.5px #d7eaf5"><svg width="303" height="24" style="position:absolute;left:0;top:0"><rect width="303" height="24" fill="url(#chl)"/></svg><div style="position:absolute;left:5.5px;top:2.3px;height:19.5px;width:107.4px;border-radius:7px;background:rgba(255,255,255,0.78)"></div><div class="t" style="left:18.7px;top:3.9px;font-size:15px;color:#363636;letter-spacing:0.31px;">0 hr/day free</div></div><div style="position:absolute;left:305px;top:114.0px;width:455px;height:24px;background:#94c9e5;overflow:hidden;box-shadow:inset 0 0 0 1.5px #91c6e3"><svg width="455" height="24" style="position:absolute;left:0;top:0"><rect width="455" height="24" fill="url(#chw)"/></svg><div style="position:absolute;left:5.5px;top:2.3px;height:19.5px;width:119.5px;border-radius:7px;background:rgba(255,255,255,0.78)"></div><div class="t" style="left:18.7px;top:3.9px;font-size:15px;color:#363636;letter-spacing:0.23px;">6.4 hr/day free</div></div><div style="position:absolute;left:761px;top:114.0px;width:303px;height:24px;background:#5b88b1;overflow:hidden;box-shadow:inset 0 0 0 1.5px #4f7ca6"><svg width="303" height="24" style="position:absolute;left:0;top:0"><rect width="303" height="24" fill="url(#chw)"/></svg><div style="position:absolute;left:5.5px;top:2.3px;height:19.5px;width:107.4px;border-radius:7px;background:rgba(255,255,255,0.78)"></div><div class="t" style="left:18.7px;top:3.9px;font-size:15px;color:#363636;letter-spacing:0.31px;">8 hr/day free</div></div><div style="position:absolute;left:1065px;top:114.0px;width:140px;height:24px;background:#94c9e5;overflow:hidden;box-shadow:inset 0 0 0 1.5px #91c6e3"><svg width="140" height="24" style="position:absolute;left:0;top:0"><rect width="140" height="24" fill="url(#chw)"/></svg><div style="position:absolute;left:5.5px;top:2.3px;height:19.5px;width:119.5px;border-radius:7px;background:rgba(255,255,255,0.78)"></div><div class="t" style="left:18.7px;top:3.9px;font-size:15px;color:#363636;letter-spacing:0.23px;">6.4 hr/day free</div></div><div style="position:absolute;left:1px;top:146.0px;width:302px;height:35px;background:#c46c9f;border-radius:6px;box-shadow:0 2px 3px rgba(0,0,0,0.22);overflow:hidden"><div style="position:absolute;left:75px;top:0;width:1px;height:35px;background:rgba(0,0,0,0.045)"></div><div style="position:absolute;left:151px;top:0;width:1px;height:35px;background:rgba(0,0,0,0.045)"></div><div style="position:absolute;left:227px;top:0;width:1px;height:35px;background:rgba(0,0,0,0.045)"></div><div class="t" style="left:7.0px;top:11.2px;font-size:13.7px;color:#fff;letter-spacing:-0.05px;-webkit-text-stroke:0.25px #fff;">01. Fiber Optic Network Exp...</div><svg width="302" height="35" style="position:absolute;left:0;top:0"><g transform="translate(-1,-146.0)"><circle cx="210.60" cy="158.89999999999998" r="10.9" fill="#fff"/><polygon points="210.60,152.60 212.36,157.07 217.16,157.37 213.45,160.43 214.66,165.08 210.60,162.50 206.54,165.08 207.75,160.43 204.04,157.37 208.84,157.07" fill="#5b7f8c"/><circle cx="235.20" cy="158.89999999999998" r="10.9" fill="#fff"/><rect x="229.90000000000003" y="153.39999999999998" width="10.6" height="10.6" fill="#d274a8"/><circle cx="259.80" cy="158.89999999999998" r="10.9" fill="#fff"/><path d="M259.80 152.89999999999998L266.20 163.89999999999998H253.40z" fill="#ff1744"/></g></svg></div><div style="position:absolute;left:305px;top:146.0px;width:226px;height:35px;background:#2b5b7f;border-radius:6px;box-shadow:0 2px 3px rgba(0,0,0,0.22);overflow:hidden"><div style="position:absolute;left:75px;top:0;width:1px;height:35px;background:rgba(0,0,0,0.045)"></div><div style="position:absolute;left:151px;top:0;width:1px;height:35px;background:rgba(0,0,0,0.045)"></div><div class="t" style="left:7.0px;top:11.2px;font-size:13.7px;color:#fff;letter-spacing:0.20px;-webkit-text-stroke:0.25px #fff;">Cloud Migration</div><svg width="226" height="35" style="position:absolute;left:0;top:0"><g transform="translate(-305,-146.0)"><circle cx="428.80" cy="158.89999999999998" r="10.9" fill="#fff"/><polygon points="428.80,152.60 430.56,157.07 435.36,157.37 431.65,160.43 432.86,165.08 428.80,162.50 424.74,165.08 425.95,160.43 422.24,157.37 427.04,157.07" fill="#23948f"/><circle cx="453.40" cy="158.89999999999998" r="10.9" fill="#fff"/><rect x="448.09999999999985" y="153.39999999999998" width="10.6" height="10.6" fill="#646aa0"/><circle cx="478.00" cy="158.89999999999998" r="10.9" fill="#fff"/><path d="M478.00 152.89999999999998L484.40 163.89999999999998H471.60z" fill="#ff1744"/></g></svg></div><div style="position:absolute;left:533px;top:146.0px;width:226px;height:35px;background:#c46c9f;border-radius:6px;box-shadow:0 2px 3px rgba(0,0,0,0.22);overflow:hidden"><div style="position:absolute;left:75px;top:0;width:1px;height:35px;background:rgba(0,0,0,0.045)"></div><div style="position:absolute;left:151px;top:0;width:1px;height:35px;background:rgba(0,0,0,0.045)"></div><div class="t" style="left:7.0px;top:11.2px;font-size:13.7px;color:#fff;letter-spacing:-0.28px;-webkit-text-stroke:0.25px #fff;">01. Fiber Optic ...</div><svg width="226" height="35" style="position:absolute;left:0;top:0"><g transform="translate(-533,-146.0)"><circle cx="667.40" cy="158.89999999999998" r="10.9" fill="#fff"/><polygon points="667.40,152.60 669.16,157.07 673.96,157.37 670.25,160.43 671.46,165.08 667.40,162.50 663.34,165.08 664.55,160.43 660.84,157.37 665.64,157.07" fill="#64aee8"/><circle cx="692.00" cy="158.89999999999998" r="10.9" fill="#fff"/><rect x="686.7" y="153.39999999999998" width="10.6" height="10.6" fill="#55639a"/><circle cx="716.60" cy="158.89999999999998" r="10.9" fill="#fff"/><path d="M716.60 152.89999999999998L723.00 163.89999999999998H710.20z" fill="#ff1744"/></g></svg></div><div style="position:absolute;left:1065px;top:146.0px;width:140px;height:35px;background:#4a7f93;border-radius:6px 0 0 6px;box-shadow:0 2px 3px rgba(0,0,0,0.22);overflow:hidden"><div style="position:absolute;left:75px;top:0;width:1px;height:35px;background:rgba(0,0,0,0.045)"></div><div class="t" style="left:7.0px;top:11.2px;font-size:13.7px;color:#fff;letter-spacing:0.01px;-webkit-text-stroke:0.25px #fff;">02. Small Cell Deployment</div><svg width="140" height="35" style="position:absolute;left:0;top:0"><g transform="translate(-1065,-146.0)"><circle cx="1249.00" cy="158.89999999999998" r="10.9" fill="#fff"/><polygon points="1249.00,152.60 1250.76,157.07 1255.56,157.37 1251.85,160.43 1253.06,165.08 1249.00,162.50 1244.94,165.08 1246.15,160.43 1242.44,157.37 1247.24,157.07" fill="#5f6f78"/><circle cx="1273.60" cy="158.89999999999998" r="10.9" fill="#fff"/><rect x="1268.3" y="153.39999999999998" width="10.6" height="10.6" fill="#f39020"/><circle cx="1298.20" cy="158.89999999999998" r="10.9" fill="#fff"/><path d="M1298.20 152.89999999999998L1304.60 163.89999999999998H1291.80z" fill="#ff1744"/></g></svg></div><div style="position:absolute;left:1px;top:196.0px;width:75px;height:24px;background:#7f9fd6;overflow:hidden;box-shadow:inset 0 0 0 1.5px #6c8ecb"><svg width="75" height="24" style="position:absolute;left:0;top:0"><rect width="75" height="24" fill="url(#chw)"/></svg><div style="position:absolute;left:5.5px;top:2.3px;height:19.5px;width:142.5px;border-radius:7px;background:rgba(255,255,255,0.78)"></div><div class="t" style="left:18.7px;top:3.9px;font-size:15px;color:#363636;letter-spacing:0.27px;">0 hr/day allocated</div></div><div style="position:absolute;left:77px;top:196.0px;width:227px;height:24px;background:#cb83b5;overflow:hidden;box-shadow:inset 0 0 0 1.5px #c97eb2"><svg width="227" height="24" style="position:absolute;left:0;top:0"><rect width="227" height="24" fill="url(#chw)"/></svg><div style="position:absolute;left:5.5px;top:2.3px;height:19.5px;width:150.5px;border-radius:7px;background:rgba(255,255,255,0.78)"></div><div class="t" style="left:18.7px;top:3.9px;font-size:15px;color:#363636;">1.6 hr/day allocated</div></div><div style="position:absolute;left:305px;top:196.0px;width:900px;height:24px;background:#6a896a;overflow:hidden;box-shadow:inset 0 0 0 1.5px #5b7b5b"><svg width="900" height="24" style="position:absolute;left:0;top:0"><rect width="900" height="24" fill="url(#chw)"/></svg><div style="position:absolute;left:5.5px;top:2.3px;height:19.5px;width:141.2px;border-radius:7px;background:rgba(255,255,255,0.78)"></div><div class="t" style="left:18.7px;top:3.9px;font-size:15px;color:#363636;letter-spacing:0.19px;">8 hr/day allocated</div></div><div style="position:absolute;left:1px;top:228.0px;width:75px;height:24px;background:#5b88b1;overflow:hidden;box-shadow:inset 0 0 0 1.5px #4f7ca6"><svg width="75" height="24" style="position:absolute;left:0;top:0"><rect width="75" height="24" fill="url(#chw)"/></svg><div style="position:absolute;left:5.5px;top:2.3px;height:19.5px;width:107.4px;border-radius:7px;background:rgba(255,255,255,0.78)"></div><div class="t" style="left:18.7px;top:3.9px;font-size:15px;color:#363636;letter-spacing:0.31px;">8 hr/day free</div></div><div style="position:absolute;left:77px;top:228.0px;width:227px;height:24px;background:#94c9e5;overflow:hidden;box-shadow:inset 0 0 0 1.5px #91c6e3"><svg width="227" height="24" style="position:absolute;left:0;top:0"><rect width="227" height="24" fill="url(#chw)"/></svg><div style="position:absolute;left:5.5px;top:2.3px;height:19.5px;width:119.5px;border-radius:7px;background:rgba(255,255,255,0.78)"></div><div class="t" style="left:18.7px;top:3.9px;font-size:15px;color:#363636;letter-spacing:0.23px;">6.4 hr/day free</div></div><div style="position:absolute;left:305px;top:228.0px;width:900px;height:24px;background:#d7eaf5;overflow:hidden;box-shadow:inset 0 0 0 1.5px #d7eaf5"><svg width="900" height="24" style="position:absolute;left:0;top:0"><rect width="900" height="24" fill="url(#chl)"/></svg><div style="position:absolute;left:5.5px;top:2.3px;height:19.5px;width:107.4px;border-radius:7px;background:rgba(255,255,255,0.78)"></div><div class="t" style="left:18.7px;top:3.9px;font-size:15px;color:#363636;letter-spacing:0.31px;">0 hr/day free</div></div><div style="position:absolute;left:77px;top:260.0px;width:226px;height:35px;background:#7a569c;border-radius:6px;box-shadow:0 2px 3px rgba(0,0,0,0.22);overflow:hidden"><div style="position:absolute;left:75px;top:0;width:1px;height:35px;background:rgba(0,0,0,0.045)"></div><div style="position:absolute;left:151px;top:0;width:1px;height:35px;background:rgba(0,0,0,0.045)"></div><div class="t" style="left:7.0px;top:11.2px;font-size:13.7px;color:#fff;letter-spacing:-0.27px;-webkit-text-stroke:0.25px #fff;">PSA Training</div><svg width="226" height="35" style="position:absolute;left:0;top:0"><g transform="translate(-77,-260.0)"><circle cx="180.00" cy="272.9" r="10.9" fill="#fff"/><polygon points="180.00,266.60 181.76,271.07 186.56,271.37 182.85,274.43 184.06,279.08 180.00,276.50 175.94,279.08 177.15,274.43 173.44,271.37 178.24,271.07" fill="#7fbfb0"/><circle cx="204.60" cy="272.9" r="10.9" fill="#fff"/><rect x="199.3" y="267.4" width="10.6" height="10.6" fill="#5b6aa0"/><circle cx="229.20" cy="272.9" r="10.9" fill="#fff"/><path d="M229.20 266.9L235.60 277.9H222.80z" fill="#ff1744"/></g></svg></div><div style="position:absolute;left:305px;top:260.0px;width:378px;height:35px;background:#1b7418;border-radius:6px;box-shadow:0 2px 3px rgba(0,0,0,0.22);overflow:hidden"><div style="position:absolute;left:75px;top:0;width:1px;height:35px;background:rgba(0,0,0,0.045)"></div><div style="position:absolute;left:151px;top:0;width:1px;height:35px;background:rgba(0,0,0,0.045)"></div><div style="position:absolute;left:227px;top:0;width:1px;height:35px;background:rgba(0,0,0,0.045)"></div><div style="position:absolute;left:303px;top:0;width:1px;height:35px;background:rgba(0,0,0,0.045)"></div><div class="t" style="left:7.0px;top:11.2px;font-size:13.7px;color:#fff;letter-spacing:0.10px;-webkit-text-stroke:0.25px #fff;">Brand Positioning Audit</div><svg width="378" height="35" style="position:absolute;left:0;top:0"><g transform="translate(-305,-260.0)"><circle cx="475.00" cy="272.9" r="10.9" fill="#fff"/><polygon points="475.00,266.60 476.76,271.07 481.56,271.37 477.85,274.43 479.06,279.08 475.00,276.50 470.94,279.08 472.15,274.43 468.44,271.37 473.24,271.07" fill="#7fbfb0"/><circle cx="499.60" cy="272.9" r="10.9" fill="#fff"/><rect x="494.2999999999999" y="267.4" width="10.6" height="10.6" fill="#5b6aa0"/><circle cx="524.20" cy="272.9" r="10.9" fill="#fff"/><path d="M524.20 266.9L530.60 277.9H517.80z" fill="#ff1744"/></g></svg></div><div style="position:absolute;left:685px;top:260.0px;width:226px;height:35px;background:#1b7418;border-radius:6px;box-shadow:0 2px 3px rgba(0,0,0,0.22);overflow:hidden"><div style="position:absolute;left:75px;top:0;width:1px;height:35px;background:rgba(0,0,0,0.045)"></div><div style="position:absolute;left:151px;top:0;width:1px;height:35px;background:rgba(0,0,0,0.045)"></div><div class="t" style="left:7.0px;top:11.2px;font-size:13.7px;color:#fff;letter-spacing:-0.17px;-webkit-text-stroke:0.25px #fff;">Brand Positionin...</div><svg width="226" height="35" style="position:absolute;left:0;top:0"><g transform="translate(-685,-260.0)"><circle cx="818.80" cy="272.9" r="10.9" fill="#fff"/><polygon points="818.80,266.60 820.56,271.07 825.36,271.37 821.65,274.43 822.86,279.08 818.80,276.50 814.74,279.08 815.95,274.43 812.24,271.37 817.04,271.07" fill="#2496a8"/><circle cx="843.40" cy="272.9" r="10.9" fill="#fff"/><rect x="838.0999999999999" y="267.4" width="10.6" height="10.6" fill="#f39020"/><circle cx="868.00" cy="272.9" r="10.9" fill="#fff"/><path d="M868.00 266.9L874.40 277.9H861.60z" fill="#ff1744"/></g></svg></div><div style="position:absolute;left:913px;top:260.0px;width:292px;height:35px;background:#4a7f93;border-radius:6px 0 0 6px;box-shadow:0 2px 3px rgba(0,0,0,0.22);overflow:hidden"><div style="position:absolute;left:75px;top:0;width:1px;height:35px;background:rgba(0,0,0,0.045)"></div><div style="position:absolute;left:151px;top:0;width:1px;height:35px;background:rgba(0,0,0,0.045)"></div><div style="position:absolute;left:227px;top:0;width:1px;height:35px;background:rgba(0,0,0,0.045)"></div><div class="t" style="left:7.0px;top:11.2px;font-size:13.7px;color:#fff;letter-spacing:0.01px;-webkit-text-stroke:0.25px #fff;">02. Small Cell Deployment</div><svg width="292" height="35" style="position:absolute;left:0;top:0"><g transform="translate(-913,-260.0)"><circle cx="1100.00" cy="272.9" r="10.9" fill="#fff"/><polygon points="1100.00,266.60 1101.76,271.07 1106.56,271.37 1102.85,274.43 1104.06,279.08 1100.00,276.50 1095.94,279.08 1097.15,274.43 1093.44,271.37 1098.24,271.07" fill="#5f6f78"/><circle cx="1124.60" cy="272.9" r="10.9" fill="#fff"/><rect x="1119.3" y="267.4" width="10.6" height="10.6" fill="#f39020"/><circle cx="1149.20" cy="272.9" r="10.9" fill="#fff"/><path d="M1149.20 266.9L1155.60 277.9H1142.80z" fill="#ff1744"/></g></svg></div><div style="position:absolute;left:1px;top:348.5px;width:1063px;height:24px;background:#90a497;overflow:hidden;box-shadow:inset 0 0 0 1.5px #859a8c"><svg width="1063" height="24" style="position:absolute;left:0;top:0"><rect width="1063" height="24" fill="url(#chw)"/></svg><div style="position:absolute;left:5.5px;top:2.3px;height:19.5px;width:141.2px;border-radius:7px;background:rgba(255,255,255,0.78)"></div><div class="t" style="left:18.7px;top:3.9px;font-size:15px;color:#363636;letter-spacing:0.19px;">6 hr/day allocated</div></div><div style="position:absolute;left:1065px;top:348.5px;width:140px;height:24px;background:#7f9fd6;overflow:hidden;box-shadow:inset 0 0 0 1.5px #6c8ecb"><svg width="140" height="24" style="position:absolute;left:0;top:0"><rect width="140" height="24" fill="url(#chw)"/></svg><div style="position:absolute;left:5.5px;top:2.3px;height:19.5px;width:142.5px;border-radius:7px;background:rgba(255,255,255,0.78)"></div><div class="t" style="left:18.7px;top:3.9px;font-size:15px;color:#363636;letter-spacing:0.27px;">0 hr/day allocated</div></div><div style="position:absolute;left:1px;top:380.5px;width:1063px;height:24px;background:#bcdcef;overflow:hidden;box-shadow:inset 0 0 0 1.5px #bcdcef"><svg width="1063" height="24" style="position:absolute;left:0;top:0"><rect width="1063" height="24" fill="url(#chl)"/></svg><div style="position:absolute;left:5.5px;top:2.3px;height:19.5px;width:107.4px;border-radius:7px;background:rgba(255,255,255,0.78)"></div><div class="t" style="left:18.7px;top:3.9px;font-size:15px;color:#363636;letter-spacing:0.31px;">2 hr/day free</div></div><div style="position:absolute;left:1065px;top:380.5px;width:140px;height:24px;background:#5b88b1;overflow:hidden;box-shadow:inset 0 0 0 1.5px #4f7ca6"><svg width="140" height="24" style="position:absolute;left:0;top:0"><rect width="140" height="24" fill="url(#chw)"/></svg><div style="position:absolute;left:5.5px;top:2.3px;height:19.5px;width:107.4px;border-radius:7px;background:rgba(255,255,255,0.78)"></div><div class="t" style="left:18.7px;top:3.9px;font-size:15px;color:#363636;letter-spacing:0.31px;">8 hr/day free</div></div><div style="position:absolute;left:1px;top:412.5px;width:1062px;height:35px;background:#4a7f93;border-radius:6px;box-shadow:0 2px 3px rgba(0,0,0,0.22);overflow:hidden"><div style="position:absolute;left:75px;top:0;width:1px;height:35px;background:rgba(0,0,0,0.045)"></div><div style="position:absolute;left:151px;top:0;width:1px;height:35px;background:rgba(0,0,0,0.045)"></div><div style="position:absolute;left:227px;top:0;width:1px;height:35px;background:rgba(0,0,0,0.045)"></div><div style="position:absolute;left:303px;top:0;width:1px;height:35px;background:rgba(0,0,0,0.045)"></div><div style="position:absolute;left:379px;top:0;width:1px;height:35px;background:rgba(0,0,0,0.045)"></div><div style="position:absolute;left:455px;top:0;width:1px;height:35px;background:rgba(0,0,0,0.045)"></div><div style="position:absolute;left:531px;top:0;width:1px;height:35px;background:rgba(0,0,0,0.045)"></div><div style="position:absolute;left:607px;top:0;width:1px;height:35px;background:rgba(0,0,0,0.045)"></div><div style="position:absolute;left:683px;top:0;width:1px;height:35px;background:rgba(0,0,0,0.045)"></div><div style="position:absolute;left:759px;top:0;width:1px;height:35px;background:rgba(0,0,0,0.045)"></div><div style="position:absolute;left:835px;top:0;width:1px;height:35px;background:rgba(0,0,0,0.045)"></div><div style="position:absolute;left:911px;top:0;width:1px;height:35px;background:rgba(0,0,0,0.045)"></div><div style="position:absolute;left:987px;top:0;width:1px;height:35px;background:rgba(0,0,0,0.045)"></div><div class="t" style="left:7.0px;top:11.2px;font-size:13.7px;color:#fff;letter-spacing:0.01px;-webkit-text-stroke:0.25px #fff;">02. Small Cell Deployment</div><svg width="1062" height="35" style="position:absolute;left:0;top:0"><g transform="translate(-1,-412.5)"><circle cx="188.00" cy="425.4" r="10.9" fill="#fff"/><polygon points="188.00,419.10 189.76,423.57 194.56,423.87 190.85,426.93 192.06,431.58 188.00,429.00 183.94,431.58 185.15,426.93 181.44,423.87 186.24,423.57" fill="#7ab4e2"/><circle cx="212.60" cy="425.4" r="10.9" fill="#fff"/><rect x="207.3" y="419.9" width="10.6" height="10.6" fill="#f88a22"/><circle cx="237.20" cy="425.4" r="10.9" fill="#fff"/><path d="M237.20 419.4L243.60 430.4H230.80z" fill="#ff1744"/></g></svg></div><div style="position:absolute;left:1px;top:539.0px;width:1063px;height:24px;background:#6a896a;overflow:hidden;box-shadow:inset 0 0 0 1.5px #5b7b5b"><svg width="1063" height="24" style="position:absolute;left:0;top:0"><rect width="1063" height="24" fill="url(#chw)"/></svg><div style="position:absolute;left:5.5px;top:2.3px;height:19.5px;width:141.2px;border-radius:7px;background:rgba(255,255,255,0.78)"></div><div class="t" style="left:18.7px;top:3.9px;font-size:15px;color:#363636;letter-spacing:0.19px;">8 hr/day allocated</div></div><div style="position:absolute;left:1065px;top:539.0px;width:140px;height:24px;background:#7f9fd6;overflow:hidden;box-shadow:inset 0 0 0 1.5px #6c8ecb"><svg width="140" height="24" style="position:absolute;left:0;top:0"><rect width="140" height="24" fill="url(#chw)"/></svg><div style="position:absolute;left:5.5px;top:2.3px;height:19.5px;width:142.5px;border-radius:7px;background:rgba(255,255,255,0.78)"></div><div class="t" style="left:18.7px;top:3.9px;font-size:15px;color:#363636;letter-spacing:0.27px;">0 hr/day allocated</div></div><div style="position:absolute;left:1px;top:571.0px;width:1063px;height:24px;background:#d7eaf5;overflow:hidden;box-shadow:inset 0 0 0 1.5px #d7eaf5"><svg width="1063" height="24" style="position:absolute;left:0;top:0"><rect width="1063" height="24" fill="url(#chl)"/></svg><div style="position:absolute;left:5.5px;top:2.3px;height:19.5px;width:107.4px;border-radius:7px;background:rgba(255,255,255,0.78)"></div><div class="t" style="left:18.7px;top:3.9px;font-size:15px;color:#363636;letter-spacing:0.31px;">0 hr/day free</div></div><div style="position:absolute;left:1065px;top:571.0px;width:140px;height:24px;background:#5b88b1;overflow:hidden;box-shadow:inset 0 0 0 1.5px #4f7ca6"><svg width="140" height="24" style="position:absolute;left:0;top:0"><rect width="140" height="24" fill="url(#chw)"/></svg><div style="position:absolute;left:5.5px;top:2.3px;height:19.5px;width:107.4px;border-radius:7px;background:rgba(255,255,255,0.78)"></div><div class="t" style="left:18.7px;top:3.9px;font-size:15px;color:#363636;letter-spacing:0.31px;">8 hr/day free</div></div><div style="position:absolute;left:1px;top:603.0px;width:606px;height:35px;background:#2b5b7f;border-radius:6px;box-shadow:0 2px 3px rgba(0,0,0,0.22);overflow:hidden"><div style="position:absolute;left:75px;top:0;width:1px;height:35px;background:rgba(0,0,0,0.045)"></div><div style="position:absolute;left:151px;top:0;width:1px;height:35px;background:rgba(0,0,0,0.045)"></div><div style="position:absolute;left:227px;top:0;width:1px;height:35px;background:rgba(0,0,0,0.045)"></div><div style="position:absolute;left:303px;top:0;width:1px;height:35px;background:rgba(0,0,0,0.045)"></div><div style="position:absolute;left:379px;top:0;width:1px;height:35px;background:rgba(0,0,0,0.045)"></div><div style="position:absolute;left:455px;top:0;width:1px;height:35px;background:rgba(0,0,0,0.045)"></div><div style="position:absolute;left:531px;top:0;width:1px;height:35px;background:rgba(0,0,0,0.045)"></div><div class="t" style="left:7.0px;top:11.2px;font-size:13.7px;color:#fff;letter-spacing:0.20px;-webkit-text-stroke:0.25px #fff;">Cloud Migration</div><svg width="606" height="35" style="position:absolute;left:0;top:0"><g transform="translate(-1,-603.0)"><circle cx="125.00" cy="615.9" r="10.9" fill="#fff"/><polygon points="125.00,609.60 126.76,614.07 131.56,614.37 127.85,617.43 129.06,622.08 125.00,619.50 120.94,622.08 122.15,617.43 118.44,614.37 123.24,614.07" fill="#7fbfb0"/><circle cx="149.60" cy="615.9" r="10.9" fill="#fff"/><rect x="144.3" y="610.4" width="10.6" height="10.6" fill="#5b6aa0"/><circle cx="174.20" cy="615.9" r="10.9" fill="#fff"/><path d="M174.20 609.9L180.60 620.9H167.80z" fill="#ff1744"/></g></svg></div><div style="position:absolute;left:609px;top:603.0px;width:454px;height:35px;background:#4a7f93;border-radius:6px;box-shadow:0 2px 3px rgba(0,0,0,0.22);overflow:hidden"><div style="position:absolute;left:75px;top:0;width:1px;height:35px;background:rgba(0,0,0,0.045)"></div><div style="position:absolute;left:151px;top:0;width:1px;height:35px;background:rgba(0,0,0,0.045)"></div><div style="position:absolute;left:227px;top:0;width:1px;height:35px;background:rgba(0,0,0,0.045)"></div><div style="position:absolute;left:303px;top:0;width:1px;height:35px;background:rgba(0,0,0,0.045)"></div><div style="position:absolute;left:379px;top:0;width:1px;height:35px;background:rgba(0,0,0,0.045)"></div><div class="t" style="left:7.0px;top:11.2px;font-size:13.7px;color:#fff;letter-spacing:0.01px;-webkit-text-stroke:0.25px #fff;">02. Small Cell Deployment</div><svg width="454" height="35" style="position:absolute;left:0;top:0"><g transform="translate(-609,-603.0)"><circle cx="796.00" cy="615.9" r="10.9" fill="#fff"/><polygon points="796.00,609.60 797.76,614.07 802.56,614.37 798.85,617.43 800.06,622.08 796.00,619.50 791.94,622.08 793.15,617.43 789.44,614.37 794.24,614.07" fill="#c8504f"/><circle cx="820.60" cy="615.9" r="10.9" fill="#fff"/><rect x="815.3" y="610.4" width="10.6" height="10.6" fill="#5b6aa0"/><circle cx="845.20" cy="615.9" r="10.9" fill="#fff"/><path d="M845.20 609.9L851.60 620.9H838.80z" fill="#ff1744"/></g></svg></div></div><div style="position:absolute;left:693px;top:907px;width:288px;height:8px;background:#b4b4b4;border-radius:4px"></div><div style="position:absolute;left:692px;top:915px;width:1205px;height:2px;background:#a9a9a9"></div>
</body></html>
